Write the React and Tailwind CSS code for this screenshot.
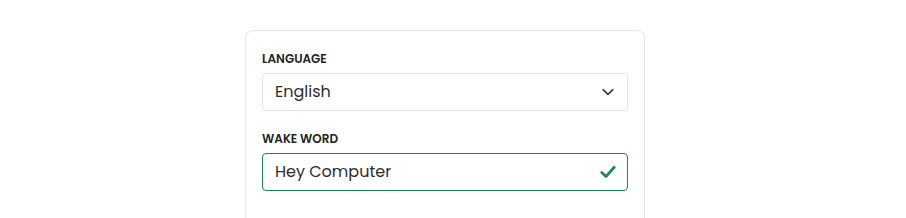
import React, { useState } from "react";

const font = { fontFamily: "Poppins, 'Noto Sans', 'Open Sans', sans-serif" };

const Field = ({ label, children, className = "" }) => (
  <div className={`flex flex-col ${className}`}>
    <label className="text-[12px] leading-4 font-semibold uppercase text-[#222] mb-1.5">
      {label}
    </label>
    {children}
  </div>
);

const App = () => {
  const [lang] = useState("English");
  const [wake] = useState("Hey Computer");

  return (
    <div className="w-[906px] h-[218px] overflow-hidden bg-white" style={font}>
      <div className="pt-[30px] pl-[245px]">
        <div className="w-[400px] h-[240px] border border-[#e6e6e6] rounded-lg px-4 pt-5">
          <Field label="Language">
            <div className="h-[38px] flex items-center justify-between border border-[#e3e3e3] rounded px-3">
              <span className="text-[16px] text-[#2d2d2d]">{lang}</span>
              <svg width="14" height="14" viewBox="0 0 14 14" className="mr-0">
                <path d="M2.2 4.6 L7 9.4 L11.8 4.6" fill="none" stroke="#333" strokeWidth="1.5" strokeLinecap="round" strokeLinejoin="round" />
              </svg>
            </div>
          </Field>
          <Field label="Wake Word" className="mt-5">
            <div className="h-[38px] flex items-center justify-between border border-[#1f8656] rounded px-3">
              <span className="text-[16px] text-[#2d2d2d]">{wake}</span>
              <svg width="16" height="14" viewBox="0 0 16 14" className="mr-[-1px]">
                <path d="M1.8 7.6 L5.9 11.6 L14.2 2.2" fill="none" stroke="#1f8a5a" strokeWidth="2.8" strokeLinecap="round" strokeLinejoin="round" />
              </svg>
            </div>
          </Field>
        </div>
      </div>
    </div>
  );
};

export default App;
